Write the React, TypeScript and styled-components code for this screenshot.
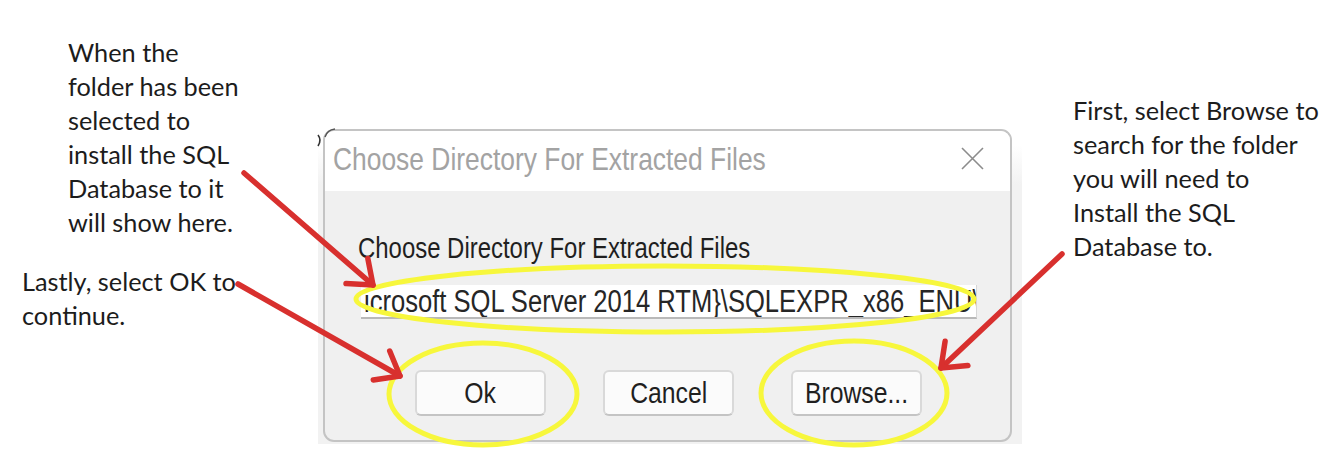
import React from "react";
import styled, { createGlobalStyle } from "styled-components";

const GlobalStyle = createGlobalStyle`
  html, body { margin: 0; padding: 0; background: #ffffff; }
  #root { width: 1342px; height: 458px; }
`;

const Page = styled.div`
  position: relative;
  width: 1342px;
  height: 458px;
  display: flex;
  align-items: flex-start;
  background: #ffffff;
  overflow: hidden;
`;

const LeftColumn = styled.div`
  width: 318px;
  flex: none;
  display: flex;
  flex-direction: column;
  gap: 25px;
  padding-top: 35px;
`;

const RightColumn = styled.div`
  flex: 1;
  padding-top: 93px;
  padding-left: 51px;
`;

const Note = styled.p<{ $indent?: number }>`
  margin: 0 0 0 ${(p) => p.$indent ?? 0}px;
  font-family: Lato, "Open Sans", sans-serif;
  font-size: 25.3px;
  line-height: 34px;
  color: #1c1c1c;
  white-space: pre-line;
`;

const ScreenCrop = styled.div`
  margin-top: 125px;
  width: 704px;
  height: 319px;
  flex: none;
  box-sizing: border-box;
  padding: 4px 10px 2px 5px;
  background: linear-gradient(#ffffff, #ffffff 20px, #f2f2f2 60px);
`;

const Dialog = styled.div`
  box-sizing: border-box;
  width: 689px;
  height: 313px;
  border: 2px solid #c4c4c4;
  border-radius: 11px;
  background: #f0f0f0;
  overflow: hidden;
  display: flex;
  flex-direction: column;
  font-family: "Liberation Sans", Arial, sans-serif;
`;

const Narrow = styled.span<{ $origin?: string }>`
  display: inline-block;
  white-space: nowrap;
  transform: scaleX(0.825);
  transform-origin: ${(p) => p.$origin ?? "left"} center;
`;

const TitleBar = styled.div`
  box-sizing: border-box;
  height: 60px;
  flex: none;
  background: #ffffff;
  display: flex;
  align-items: center;
  justify-content: space-between;
  padding: 0 25px 5px 8px;
`;

const Title = styled.span`
  font-size: 32px;
  line-height: 36px;
  color: #a3a3a3;
`;

const CloseIcon = styled.svg`
  width: 25px;
  height: 25px;
  flex: none;
`;

const Body = styled.div`
  flex: 1;
  display: flex;
  flex-direction: column;
  padding: 40px 33px 0 33px;
`;

const Label = styled.span`
  font-size: 29px;
  line-height: 34px;
  color: #1f1f1f;
`;

const PathField = styled.div`
  margin: 20px 0 0 3px;
  width: 616px;
  height: 34px;
  box-sizing: border-box;
  background: #ffffff;
  border-bottom: 2px solid #b9b9b9;
  border-right: 1px solid #d6d6d6;
  overflow: hidden;
  white-space: nowrap;
  font-size: 31px;
  line-height: 33px;
  color: #262626;
  padding-left: 3px;
`;

const ButtonRow = styled.div`
  display: flex;
  gap: 57px;
  margin: 51px 0 0 57px;
`;

const Button = styled.div`
  width: 131px;
  height: 46px;
  box-sizing: border-box;
  border: 2px solid #d9d9d9;
  border-bottom-color: #c4c4c4;
  border-radius: 6px;
  background: #fbfbfb;
  display: flex;
  align-items: center;
  justify-content: center;
  font-size: 30px;
  line-height: 34px;
  color: #1f1f1f;
`;

const Overlay = styled.svg`
  position: absolute;
  left: 0;
  top: 0;
  width: 1342px;
  height: 458px;
  pointer-events: none;
`;

const RED = "#d8302e";
const YELLOW = "#f7f73c";
const PATH_TEXT = "icrosoft SQL Server 2014 RTM}\\SQLEXPR_x86_ENU\\";

function Arrow({ x1, y1, x2, y2 }: { x1: number; y1: number; x2: number; y2: number }) {
  const ang = Math.atan2(y2 - y1, x2 - x1);
  const len = 27;
  const spread = (38 * Math.PI) / 180;
  const a1 = ang + Math.PI - spread;
  const a2 = ang + Math.PI + spread;
  const p1 = `${x2 + len * Math.cos(a1)},${y2 + len * Math.sin(a1)}`;
  const p2 = `${x2 + len * Math.cos(a2)},${y2 + len * Math.sin(a2)}`;
  return (
    <g stroke={RED} strokeWidth={5.5} strokeLinecap="round" strokeLinejoin="round" fill="none">
      <line x1={x1} y1={y1} x2={x2} y2={y2} />
      <polyline points={`${p1} ${x2},${y2} ${p2}`} />
    </g>
  );
}

export default function App() {
  return (
    <>
      <GlobalStyle />
      <Page>
        <LeftColumn>
          <Note $indent={68}>
            {"When the\nfolder has been\nselected to\ninstall the SQL\nDatabase to it\nwill show here."}
          </Note>
          <Note $indent={22}>{"Lastly, select OK to\ncontinue."}</Note>
        </LeftColumn>

        <ScreenCrop>
          <Dialog>
            <TitleBar>
              <Title>
                <Narrow>Choose Directory For Extracted Files</Narrow>
              </Title>
              <CloseIcon viewBox="0 0 25 25">
                <path d="M2 2 L23 23 M23 2 L2 23" stroke="#8c8c8c" strokeWidth="1.6" fill="none" />
              </CloseIcon>
            </TitleBar>
            <Body>
              <Label>
                <Narrow>Choose Directory For Extracted Files</Narrow>
              </Label>
              <PathField>
                <Narrow>{PATH_TEXT}</Narrow>
              </PathField>
              <ButtonRow>
                <Button>
                  <Narrow $origin="center">Ok</Narrow>
                </Button>
                <Button>
                  <Narrow $origin="center">Cancel</Narrow>
                </Button>
                <Button>
                  <Narrow $origin="center">Browse...</Narrow>
                </Button>
              </ButtonRow>
            </Body>
          </Dialog>
        </ScreenCrop>

        <RightColumn>
          <Note>
            {"First, select Browse to\nsearch for the folder\nyou will need to\nInstall the SQL\nDatabase to."}
          </Note>
        </RightColumn>

        <Overlay viewBox="0 0 1342 458">
          <path d="M318 135 Q322 140 318 146" stroke="#333" strokeWidth="1.6" fill="none" />
          <path d="M325 137 Q327 130 335 129" stroke="#555" strokeWidth="1.4" fill="none" />
          <g fill="none" stroke={YELLOW} strokeWidth={5}>
            <ellipse cx={665} cy={299} rx={309} ry={33} />
            <ellipse cx={483} cy={394} rx={94} ry={51} />
            <ellipse cx={854} cy={393} rx={93} ry={52} />
          </g>
          <Arrow x1={244} y1={173} x2={373} y2={285} />
          <Arrow x1={238} y1={284} x2={400} y2={376} />
          <Arrow x1={1062} y1={254} x2={941} y2={368} />
        </Overlay>
      </Page>
    </>
  );
}
